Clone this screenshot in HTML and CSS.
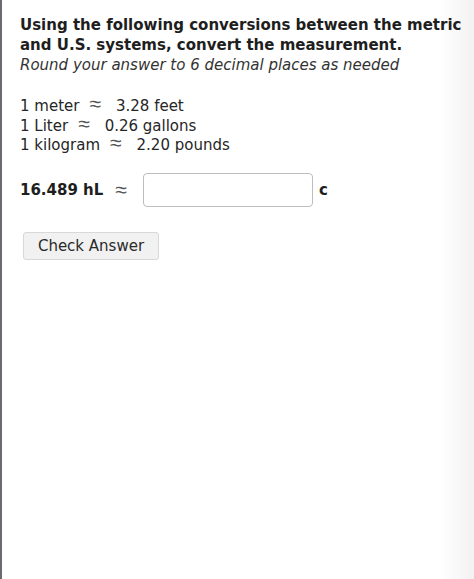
FILE: index.html
```html
<!DOCTYPE html>
<html>
<head>
<meta charset="utf-8">
<link rel="stylesheet" href="styles.css">
</head>
<body>
<div class="page">
  <div class="question">
    <p class="prompt">Using the following conversions between the metric and U.S. systems, convert the measurement.</p>
    <p class="note">Round your answer to 6 decimal places as needed</p>
  </div>
  <div class="conversions">
    <div class="conv">1 meter<span class="approx">≈</span>3.28 feet</div>
    <div class="conv">1 Liter<span class="approx">≈</span>0.26 gallons</div>
    <div class="conv">1 kilogram<span class="approx">≈</span>2.20 pounds</div>
  </div>
  <div class="answer-row">
    <span class="given">16.489 hL</span>
    <span class="approx">≈</span>
    <input class="answer" type="text">
    <span class="unit">c</span>
  </div>
  <button class="check">Check Answer</button>
</div>
</body>
</html>
```
FILE: styles.css
```css
html, body {
  margin: 0;
  height: 100%;
}
body {
  background: linear-gradient(to right, #ffffff 0, #ffffff 440px, #f2f2f2 474px);
  font-family: "DejaVu Sans", Verdana, sans-serif;
  color: #1e1e1e;
  border-left: 2px solid #6a6a70;
  box-sizing: border-box;
}
.page {
  padding: 15px 0 0 18px;
}
.question p {
  margin: 0;
  font-size: 15px;
  line-height: 20px;
}
.prompt {
  font-weight: bold;
}
.note {
  font-style: italic;
  color: #333;
}
.conversions {
  margin-top: 22px;
}
.conv {
  font-size: 15px;
  line-height: 19.5px;
  color: #262626;
}
.approx {
  font-family: "Noto Sans", sans-serif;
  font-weight: 300;
  color: #555;
  margin: 0 15px 0 10px;
  font-size: 21px;
  line-height: 13px;
}
.answer-row {
  display: flex;
  align-items: center;
  margin-top: 17px;
  height: 34px;
}
.given {
  font-weight: bold;
  font-size: 15px;
}
.answer-row .approx {
  margin: 0 16px 0 12px;
  line-height: 1;
}
.answer {
  width: 170px;
  height: 34px;
  box-sizing: border-box;
  border: 1px solid #bdbdbd;
  border-radius: 4px;
  background: #fff;
  margin: 0;
}
.unit {
  font-weight: bold;
  font-size: 15px;
  margin-left: 6px;
}
.check {
  display: block;
  margin: 25px 0 0 3px;
  width: 136px;
  height: 28px;
  box-sizing: border-box;
  background: #f1f1f1;
  border: 1px solid #d8d8d8;
  border-radius: 3px;
  font-family: "DejaVu Sans", Verdana, sans-serif;
  font-size: 15px;
  color: #2a2a2a;
  padding: 0;
}
```
